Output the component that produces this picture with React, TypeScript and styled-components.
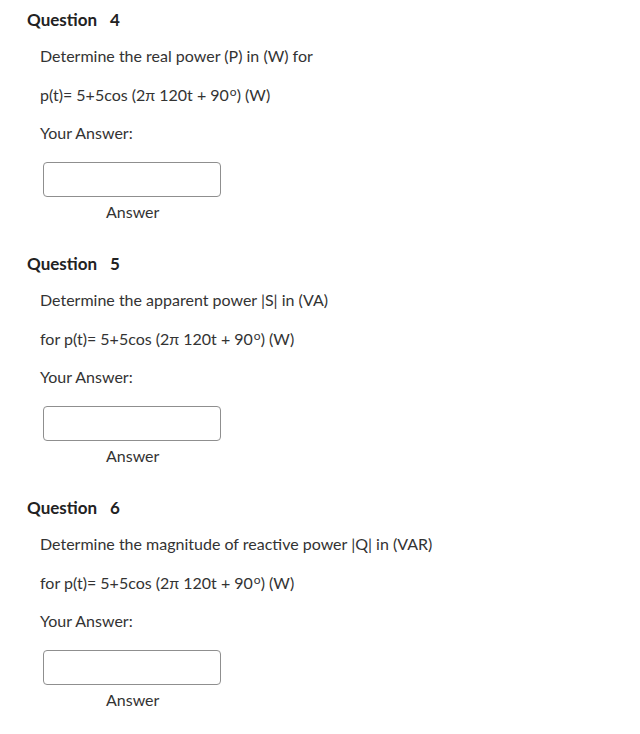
import React from "react";
import styled, { createGlobalStyle } from "styled-components";

const GlobalStyle = createGlobalStyle`
    body {
        margin: 0;
        background: #fff;
        font-family: Lato, "Noto Sans", sans-serif;
        color: #2d2d2d;
    }
`;

const Page = styled.div`
    display: flex;
    flex-direction: column;
    width: 640px;
`;

const QuestionBlock = styled.section`
    display: flex;
    flex-direction: column;
    height: 244px;
`;

const Heading = styled.h2`
    margin: 0;
    padding: 8px 0 8px 27px;
    font-size: 17px;
    font-weight: 700;
    line-height: 24px;
    color: #222;

    span {
        margin-left: 13px;
    }
`;

const Line = styled.p<{ gap: number }>`
    margin: ${(p) => p.gap}px 0 0 40px;
    font-size: 16px;
    line-height: 24px;
    color: #333;

    sup {
        font-size: 12px;
        vertical-align: 5px;
        line-height: 0;
        margin-left: 1px;
    }
`;

const AnswerBox = styled.input`
    box-sizing: border-box;
    margin: 17px 0 0 43px;
    width: 178px;
    height: 35px;
    border: 1px solid #8f8f8f;
    border-radius: 4px;
    background: #fff;
    outline: none;
`;

const AnswerLabel = styled.div`
    margin: 3px 0 0 106px;
    font-size: 16px;
    line-height: 24px;
    color: #333;
`;

type Q = { num: number; prompt: string; formula: string };

const questions: Q[] = [
    { num: 4, prompt: "Determine the real power (P) in (W) for", formula: "p(t)= 5+5cos (2π 120t + 90" },
    { num: 5, prompt: "Determine the apparent power |S| in (VA)", formula: "for p(t)= 5+5cos (2π 120t + 90" },
    { num: 6, prompt: "Determine the magnitude of reactive power |Q| in (VAR)", formula: "for p(t)= 5+5cos (2π 120t + 90" },
];

const App = () => {
    return (
        <Page>
            <GlobalStyle />
            {questions.map((q) => (
                <QuestionBlock key={q.num}>
                    <Heading>
                        Question<span>{q.num}</span>
                    </Heading>
                    <Line gap={4}>{q.prompt}</Line>
                    <Line gap={15}>
                        {q.formula}
                        <sup>o</sup>) (W)
                    </Line>
                    <Line gap={14}>Your Answer:</Line>
                    <AnswerBox aria-label={`Question ${q.num} answer`} />
                    <AnswerLabel>Answer</AnswerLabel>
                </QuestionBlock>
            ))}
        </Page>
    );
};

export default App;
